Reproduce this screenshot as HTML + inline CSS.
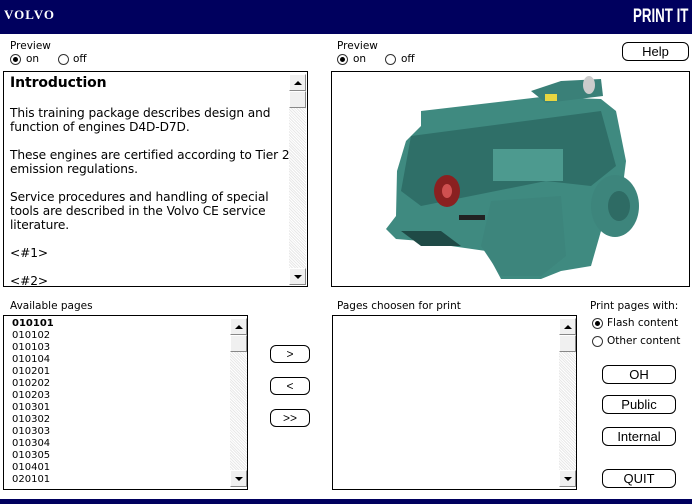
<!DOCTYPE html>
<html><head><meta charset="utf-8"><style>
*{margin:0;padding:0;box-sizing:border-box}
body{width:692px;height:504px;background:#fff;position:relative;overflow:hidden;font-family:"DejaVu Sans","Liberation Sans",sans-serif;font-size:10px;color:#000}
.a{position:absolute}
.hdr{left:0;top:0;width:692px;height:34px;background:#00005e}
.box{border:1px solid #000;background:#fff}
.sb{position:absolute;width:17px;background:repeating-linear-gradient(45deg,#e8e8e8 0 1px,#fff 1px 2px)}
.sb .up,.sb .dn,.sb .th{position:absolute;left:0;width:17px;height:17px;background:#f0f0f0;border:1px solid;border-color:#fff #888 #888 #fff}
.sb .up:after,.sb .dn:after{content:"";position:absolute;left:4px;border-left:4px solid transparent;border-right:4px solid transparent}
.sb .up:after{top:6px;border-bottom:4px solid #000}
.sb .dn:after{top:6px;border-top:4px solid #000}
.btn{position:absolute;border:1px solid #000;border-radius:6px;background:#fff;text-align:center;font-family:"Liberation Sans",sans-serif;font-size:13px;line-height:17px}
.rad{position:absolute;width:11px;height:11px;border:1px solid #333;border-radius:50%;background:#fff}
.rad.on:after{content:"";position:absolute;left:2px;top:2px;width:5px;height:5px;border-radius:50%;background:#000}
.lbl{position:absolute;font-size:10.5px;white-space:nowrap}
</style></head><body>
<div class="a hdr"></div>
<div class="a" style="left:4px;top:7px;color:#fff;font-family:'Liberation Serif',serif;font-weight:bold;font-size:13px;letter-spacing:1px">VOLVO</div>
<div class="a" style="left:633px;top:6px;color:#fff;font-family:'Liberation Sans',sans-serif;font-weight:bold;font-size:19px;transform:scaleX(0.7);transform-origin:left;white-space:nowrap">PRINT IT</div>

<div class="lbl" style="left:10px;top:40px">Preview</div>
<div class="rad on" style="left:10px;top:54px"></div><div class="lbl" style="left:26px;top:53px">on</div>
<div class="rad" style="left:58px;top:54px"></div><div class="lbl" style="left:73px;top:53px">off</div>
<div class="lbl" style="left:337px;top:40px">Preview</div>
<div class="rad on" style="left:337px;top:54px"></div><div class="lbl" style="left:353px;top:53px">on</div>
<div class="rad" style="left:385px;top:54px"></div><div class="lbl" style="left:401px;top:53px">off</div>
<div class="btn" style="left:622px;top:42px;width:67px;height:19px">Help</div>

<div class="a box" style="left:3px;top:71px;width:305px;height:216px;overflow:hidden">
<div style="position:absolute;left:6px;top:2px;width:280px;font-size:12.2px;line-height:14px;letter-spacing:-0.1px">
<div style="font-weight:bold;font-size:14px;margin-bottom:14px;line-height:18px">Introduction</div>
<div style="margin-bottom:14px">This training package describes design and function of engines D4D-D7D.</div>
<div style="margin-bottom:14px">These engines are certified according to Tier 2 emission regulations.</div>
<div style="margin-bottom:14px">Service procedures and handling of special tools are described in the Volvo CE service literature.</div>
<div style="margin-bottom:14px">&lt;#1&gt;</div>
<div>&lt;#2&gt;</div></div>
<div class="sb" style="left:285px;top:2px;height:211px"><div class="up" style="top:0"></div><div class="th" style="top:17px"></div><div class="dn" style="top:194px"></div></div>
</div>

<div class="a box" style="left:331px;top:71px;width:359px;height:216px;overflow:hidden">
<svg width="359" height="216" style="position:absolute;left:0;top:0">
<g transform="translate(-331,-71)">
<path d="M420 110 L540 96 L600 98 L615 110 L625 160 L620 200 L600 230 L590 265 L560 270 L540 278 L500 278 L485 250 L450 245 L420 240 L395 238 L385 228 L395 215 L396 170 L405 140 L420 125 Z" fill="#3f8a80"/>
<path d="M410 135 L600 110 L615 165 L590 185 L545 180 L420 205 L400 190 Z" fill="#2f6f68"/>
<rect x="492" y="148" width="70" height="32" fill="#4d9a8f"/>
<path d="M530 90 L560 80 L600 78 L602 95 L545 102 Z" fill="#3a8078"/>
<ellipse cx="588" cy="84" rx="6" ry="9" fill="#ccc"/>
<rect x="544" y="93" width="12" height="7" fill="#e8d640"/>
<path d="M490 200 L560 195 L565 255 L540 275 L500 275 L480 245 Z" fill="#3d857c"/>
<ellipse cx="614" cy="205" rx="24" ry="31" fill="#3d857c"/>
<ellipse cx="618" cy="205" rx="11" ry="15" fill="#2e6b64"/>
<ellipse cx="446" cy="190" rx="13" ry="16" fill="#8a2020"/>
<ellipse cx="446" cy="190" rx="5" ry="7" fill="#d05050"/>
<rect x="458" y="214" width="26" height="5" fill="#222"/>
<path d="M400 230 L440 230 L460 245 L420 245 Z" fill="#1f4a46"/>
</g></svg>
</div>

<div class="lbl" style="left:10px;top:300px">Available pages</div>
<div class="a box" style="left:3px;top:315px;width:245px;height:175px;overflow:hidden">
<div style="position:absolute;left:8px;top:2px;font-size:10px;line-height:12px">
<b>010101</b><br>010102<br>010103<br>010104<br>010201<br>010202<br>010203<br>010301<br>010302<br>010303<br>010304<br>010305<br>010401<br>020101</div>
<div class="sb" style="left:226px;top:2px;height:169px"><div class="up" style="top:0"></div><div class="th" style="top:17px"></div><div class="dn" style="top:152px"></div></div>
</div>
<div class="btn" style="left:270px;top:345px;width:40px;height:18px;font-size:12px">&gt;</div>
<div class="btn" style="left:270px;top:377px;width:40px;height:18px;font-size:12px">&lt;</div>
<div class="btn" style="left:270px;top:409px;width:40px;height:18px;font-size:12px">&gt;&gt;</div>

<div class="lbl" style="left:337px;top:300px">Pages choosen for print</div>
<div class="a box" style="left:332px;top:315px;width:245px;height:175px">
<div class="sb" style="left:226px;top:2px;height:169px"><div class="up" style="top:0"></div><div class="th" style="top:17px"></div><div class="dn" style="top:152px"></div></div>
</div>

<div class="lbl" style="left:590px;top:300px">Print pages with:</div>
<div class="rad on" style="left:592px;top:318px"></div><div class="lbl" style="left:607px;top:317px">Flash content</div>
<div class="rad" style="left:592px;top:336px"></div><div class="lbl" style="left:607px;top:335px">Other content</div>
<div class="btn" style="left:602px;top:365px;width:74px;height:19px">OH</div>
<div class="btn" style="left:602px;top:395px;width:74px;height:19px">Public</div>
<div class="btn" style="left:602px;top:427px;width:74px;height:19px">Internal</div>
<div class="btn" style="left:602px;top:469px;width:74px;height:19px">QUIT</div>

<div class="a" style="left:0;top:499px;width:692px;height:5px;background:#00005e"></div>
</body></html>
